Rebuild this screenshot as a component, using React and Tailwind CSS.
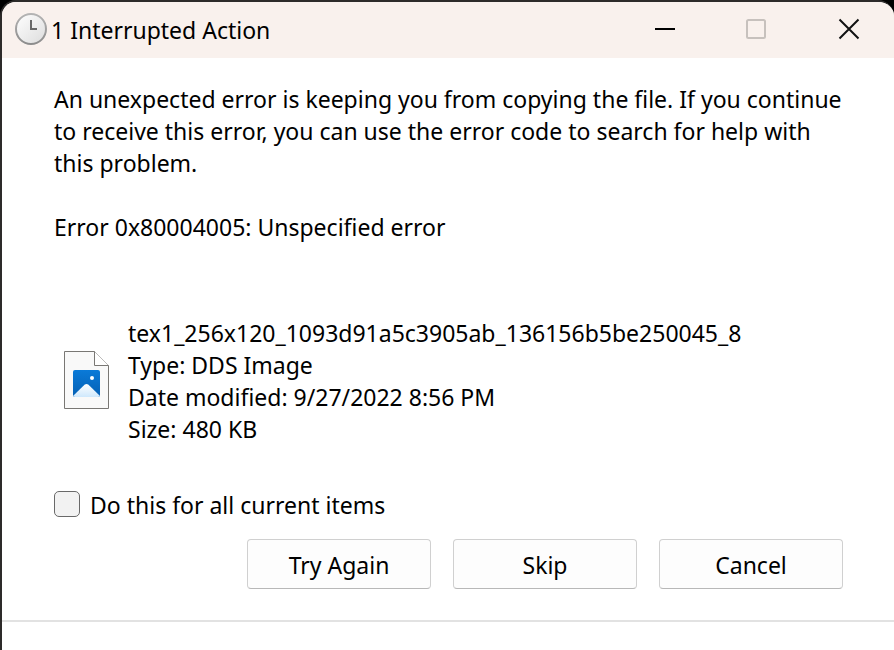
import React, { useState } from "react";

const file = {
  name: "tex1_256x120_1093d91a5c3905ab_136156b5be250045_8",
  type: "DDS Image",
  modified: "9/27/2022 8:56 PM",
  size: "480 KB",
};

const ClockIcon = () => (
  <svg width="32" height="32" viewBox="0 0 32 32" aria-hidden="true">
    <defs>
      <linearGradient id="clockFace" x1="0" y1="0" x2="1" y2="1">
        <stop offset="0" stopColor="#ffffff" />
        <stop offset="1" stopColor="#dcdcdc" />
      </linearGradient>
      <linearGradient id="clockRim" x1="0" y1="0" x2="0" y2="1">
        <stop offset="0" stopColor="#b4b4b4" />
        <stop offset="1" stopColor="#8c8c8c" />
      </linearGradient>
    </defs>
    <circle cx="16" cy="16" r="15" fill="url(#clockFace)" stroke="url(#clockRim)" strokeWidth="2" />
    <path d="M16 7v9h6" fill="none" stroke="#686868" strokeWidth="2" />
  </svg>
);

const ImageFileIcon = () => (
  <svg className="mb-0.5" width="46" height="59" viewBox="0 0 46 59" aria-hidden="true">
    <defs>
      <linearGradient id="sky" x1="0" y1="0" x2="0" y2="1">
        <stop offset="0" stopColor="#0a7ad8" />
        <stop offset="1" stopColor="#0560b4" />
      </linearGradient>
      <linearGradient id="hill" x1="0" y1="0" x2="0" y2="1">
        <stop offset="0" stopColor="#ffffff" />
        <stop offset="1" stopColor="#cfe8fc" />
      </linearGradient>
      <clipPath id="photo">
        <rect x="9" y="19" width="27" height="27" rx="2" />
      </clipPath>
    </defs>
    <path d="M.5 .5h30l14 14v43H.5z" fill="#f9f9f9" stroke="#797774" />
    <path d="M30.5 .5v14h14" fill="#ffffff" stroke="#797774" />
    <g clipPath="url(#photo)">
      <rect x="9" y="19" width="27" height="27" fill="url(#sky)" />
      <path d="M9 46v-1L20.500 33.800q2-1.800 4 0L36 45v1z" fill="url(#hill)" />
      <circle cx="28" cy="27" r="2" fill="#ffffff" />
    </g>
  </svg>
);

const TitleBar = () => (
  <header className="flex h-14 items-center bg-[#f9f1ed] pl-[13px] pr-[34px]">
    <div className="flex items-center gap-1 pb-0.5">
      <ClockIcon />
      <h1 className="pt-0.5 text-[23px] leading-7">1 Interrupted Action</h1>
    </div>

    <div className="ml-auto flex items-center gap-[70px] pb-0.5">
      <button type="button" aria-label="Minimize">
        <svg width="22" height="22" viewBox="0 0 22 22">
          <path d="M1 11h20" stroke="#000" strokeWidth="2" />
        </svg>
      </button>
      <button type="button" aria-label="Maximize" disabled>
        <svg width="22" height="22" viewBox="0 0 22 22">
          <rect x="1" y="2" width="18" height="18" rx="1.500" fill="none" stroke="#c7c1bd" strokeWidth="2" />
        </svg>
      </button>
      <button type="button" aria-label="Close">
        <svg width="22" height="22" viewBox="0 0 22 22">
          <path d="M1.500 1.500l19 19M20.500 1.500l-19 19" stroke="#111" strokeWidth="2" />
        </svg>
      </button>
    </div>
  </header>
);

const DialogButton = ({ children }) => (
  <button
    type="button"
    className="h-[50px] w-46 rounded border border-[#d0d0d0] border-b-[#b8b8b8] bg-[#fdfdfd] pt-0.5 hover:bg-gray-50"
  >
    {children}
  </button>
);

const App = () => {
  const [applyToAll, setApplyToAll] = useState(false);

  return (
    <div className="min-h-screen bg-black">
      <div className="flex min-h-screen flex-col overflow-hidden rounded-t-2xl border-l-2 border-t-2 border-[#2d2b2a] bg-white font-['Noto_Sans','Open_Sans',sans-serif] text-[23px] leading-8 text-black">
        <TitleBar />

        <main className="border-b-2 border-[#e2e2e2] pb-[31px] pl-[52px] pr-[51px] pt-[25px]">
          <p>
            An unexpected error is keeping you from copying the file. If you
            continue to receive this error, you can use the error code to search
            for help with this problem.
          </p>
          <p className="mt-8">Error 0x80004005: Unspecified error</p>

          {/* File details */}
          <section className="mt-[74px] flex items-center gap-[18px] pl-2.5">
            <ImageFileIcon />
            <div>
              <p>{file.name}</p>
              <p>Type: {file.type}</p>
              <p>Date modified: {file.modified}</p>
              <p>Size: {file.size}</p>
            </div>
          </section>

          <label className="mt-11 flex w-fit items-center gap-2.5">
            <input
              type="checkbox"
              checked={applyToAll}
              onChange={(e) => setApplyToAll(e.target.checked)}
              className="mb-0.5 size-[26px] appearance-none rounded-[5px] border border-[#696969] bg-[#f2f2f2] checked:bg-[#0067c0]"
            />
            Do this for all current items
          </label>

          <div className="mt-[18px] flex justify-end gap-[22px]">
            <DialogButton>Try Again</DialogButton>
            <DialogButton>Skip</DialogButton>
            <DialogButton>Cancel</DialogButton>
          </div>
        </main>
      </div>
    </div>
  );
};

export default App;
